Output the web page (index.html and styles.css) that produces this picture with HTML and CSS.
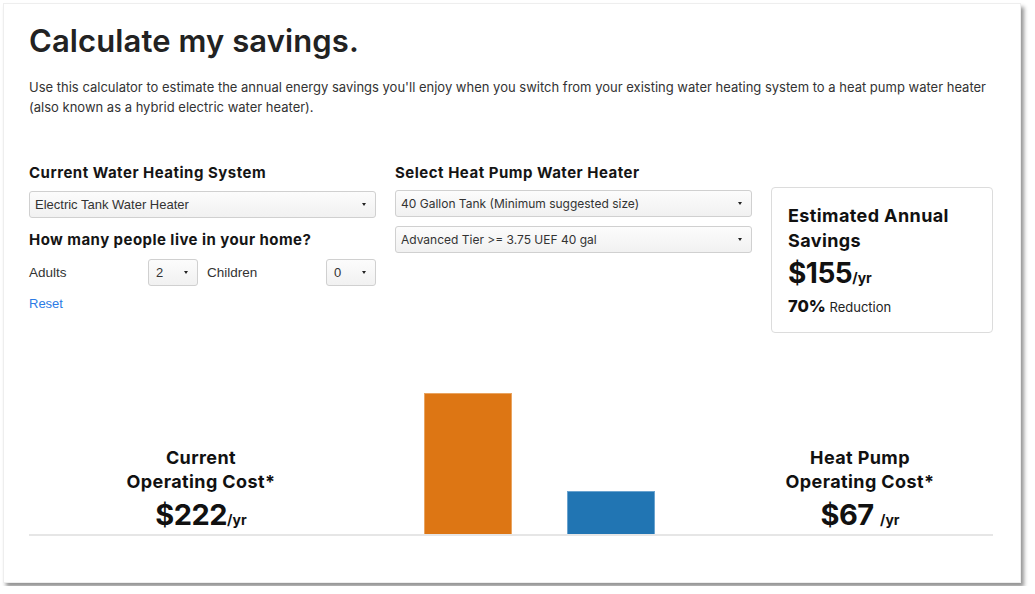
FILE: index.html
```html
<!DOCTYPE html>
<html lang="en">
<head>
<meta charset="utf-8">
<title>Calculate my savings</title>
<link rel="stylesheet" href="styles.css">
</head>
<body>
<div class="window">
  <h1 class="title">Calculate my savings.</h1>
  <p class="intro">Use this calculator to estimate the annual energy savings you'll enjoy when you switch from your existing water heating system to a heat pump water heater (also known as a hybrid electric water heater).</p>

  <div class="form-grid">
    <div class="col">
      <div class="label">Current Water Heating System</div>
      <div class="select sys"><span>Electric Tank Water Heater</span><span class="caret"></span></div>
      <div class="label sub">How many people live in your home?</div>
      <div class="people">
        <span class="plabel adults">Adults</span>
        <div class="select small"><span>2</span><span class="caret"></span></div>
        <span class="plabel children">Children</span>
        <div class="select small"><span>0</span><span class="caret"></span></div>
      </div>
      <a class="reset" href="#">Reset</a>
    </div>
    <div class="col">
      <div class="label">Select Heat Pump Water Heater</div>
      <div class="select dm"><span>40 Gallon Tank (Minimum suggested size)</span><span class="caret"></span></div>
      <div class="select dm second"><span>Advanced Tier &gt;= 3.75 UEF 40 gal</span><span class="caret"></span></div>
    </div>
    <div class="col col-box">
      <div class="savings">
        <div class="savings-title">Estimated Annual Savings</div>
        <div class="savings-amount">$155<span class="per">/yr</span></div>
        <div class="savings-pct"><b>70%</b> Reduction</div>
      </div>
    </div>
  </div>

  <div class="chart">
    <div class="cost cost-left">
      <div class="cost-title">Current<br>Operating Cost*</div>
      <div class="cost-amount">$222<span class="per">/yr</span></div>
    </div>
    <div class="bars">
      <div class="bar orange" style="height:141px"></div>
      <div class="bar blue" style="height:43px"></div>
    </div>
    <div class="cost cost-right">
      <div class="cost-title">Heat Pump<br>Operating Cost*</div>
      <div class="cost-amount">$67 <span class="per">/yr</span></div>
    </div>
  </div>
</div>
</body>
</html>
```

FILE: styles.css
```css
html, body {
  margin: 0;
  padding: 0;
  background: #ffffff;
}

body {
  font-family: Inter, "Noto Sans", sans-serif;
  color: #222;
}

.window {
  margin: 3px;
  width: 1018px;
  height: 580px;
  box-sizing: border-box;
  background: #fff;
  border: 1px solid #eeeeee;
  box-shadow: 3px 4px 4px rgba(0, 0, 0, 0.42);
  padding: 0 27px 0 25px;
}

.title {
  margin: 0;
  padding-top: 18px;
  font-size: 31px;
  line-height: 38px;
  font-weight: 600;
  color: #222;
  letter-spacing: 0.1px;
}

.intro {
  margin: 17px 0 0;
  font-size: 13px;
  line-height: 20px;
  color: #333;
}

.form-grid {
  display: grid;
  grid-template-columns: 347px 357px 222px;
  column-gap: 19px;
  margin-top: 46px;
}

.col {
  display: flex;
  flex-direction: column;
  align-items: stretch;
}

.label {
  font-size: 15px;
  line-height: 20px;
  font-weight: 700;
  color: #151515;
  letter-spacing: 0.5px;
}

.label.sub {
  margin-top: 12px;
  letter-spacing: 0.45px;
}

.select {
  display: flex;
  align-items: center;
  justify-content: space-between;
  height: 27px;
  box-sizing: border-box;
  margin-top: 8px;
  padding: 0 9px 0 5px;
  border: 1px solid #d0d0d0;
  border-radius: 3px;
  background: linear-gradient(#fcfcfc, #f1f1f1);
  font-family: "Liberation Sans", Arial, sans-serif;
  font-size: 13px;
  color: #333;
}

.select.dm {
  font-family: Inter, "Noto Sans", sans-serif;
  font-size: 12px;
  margin-top: 7px;
}

.select.dm.second {
  margin-top: 9px;
}

.caret {
  width: 0;
  height: 0;
  border-left: 2.5px solid transparent;
  border-right: 2.5px solid transparent;
  border-top: 3px solid #222;
}

.people {
  display: flex;
  align-items: center;
  margin-top: 9px;
}

.people .select {
  margin-top: 0;
  width: 50px;
  padding-left: 7px;
}

.plabel {
  font-family: "Liberation Sans", Arial, sans-serif;
  font-size: 13.5px;
  color: #333;
}

.adults {
  width: 119px;
}

.children {
  width: 119px;
  margin-left: 9px;
}

.reset {
  margin-top: 10px;
  font-family: "Liberation Sans", Arial, sans-serif;
  font-size: 13px;
  line-height: 16px;
  color: #2c7be5;
  text-decoration: none;
}

.col-box {
  padding-top: 24px;
}

.savings {
  border: 1px solid #dcdcdc;
  border-radius: 4px;
  height: 146px;
  box-sizing: border-box;
  padding: 15px 16px 0;
}

.savings-title {
  font-size: 18px;
  line-height: 25px;
  font-weight: 700;
  color: #111;
  letter-spacing: 0.4px;
  width: 190px;
}

.savings-amount {
  margin-top: 3px;
  font-size: 28px;
  line-height: 34px;
  font-weight: 700;
  color: #111;
  letter-spacing: -0.5px;
}

.per {
  font-size: 14px;
  font-weight: 700;
  letter-spacing: 0;
}

.savings-pct {
  margin-top: 1px;
  font-size: 13px;
  color: #222;
}

.savings-pct b {
  font-size: 16.5px;
  font-weight: 800;
  color: #111;
}

.chart {
  display: flex;
  align-items: flex-end;
  height: 160px;
  margin-top: 41px;
  border-bottom: 2px solid #e6e6e6;
}

.cost {
  text-align: center;
  padding-bottom: 0;
  color: #111;
}

.cost-left {
  width: 344px;
}

.cost-right {
  width: 266px;
}

.cost-title {
  font-size: 18px;
  line-height: 24px;
  font-weight: 700;
  letter-spacing: 0.4px;
}

.cost-amount {
  margin-top: 7px;
  font-size: 29px;
  line-height: 28px;
  font-weight: 700;
  letter-spacing: -0.5px;
}

.bars {
  flex: 1;
  display: flex;
  align-items: flex-end;
  gap: 55px;
  padding-left: 51px;
  height: 100%;
}

.bar {
  width: 88px;
  box-sizing: border-box;
}

.bar.orange {
  background: #dd7614;
  border: 1px solid #e9a460;
  border-bottom: none;
}

.bar.blue {
  background: #2175b3;
  border: 1px solid #6aa3cf;
  border-bottom: none;
}
```
